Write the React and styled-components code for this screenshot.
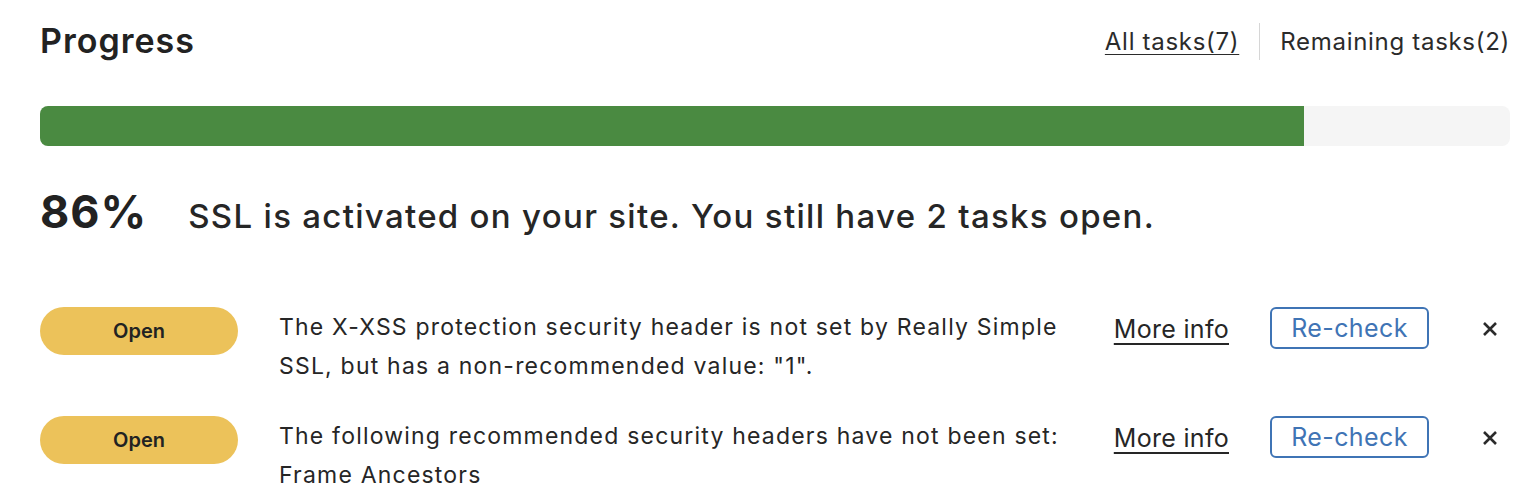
import React from "react";
import styled, { createGlobalStyle } from "styled-components";

const GlobalStyle = createGlobalStyle`
  body {
    margin: 0;
    background: #fff;
    font-family: Inter, "Noto Sans", sans-serif;
    color: #262626;
  }
`;

const tasks = [
  {
    id: 1,
    status: "Open",
    text: 'The X-XSS protection security header is not set by Really Simple SSL, but has a non-recommended value: "1".',
  },
  {
    id: 2,
    status: "Open",
    text: "The following recommended security headers have not been set: Frame Ancestors",
  },
];

const percent = 86;

const App = () => {
  return (
    <>
      <GlobalStyle />
      <Block>
        <Header>
          <Title>Progress</Title>
          <Filters>
            <FilterLink active>All tasks(7)</FilterLink>
            <Divider />
            <FilterLink>Remaining tasks(2)</FilterLink>
          </Filters>
        </Header>

        <Track>
          <Fill style={{ width: `${percent}%` }} />
        </Track>

        <Summary>
          <Percent>{percent}%</Percent>
          <SummaryText>SSL is activated on your site. You still have 2 tasks open.</SummaryText>
        </Summary>

        <TaskList>
          {tasks.map((task) => (
            <TaskRow key={task.id}>
              <Badge>{task.status}</Badge>
              <TaskText>{task.text}</TaskText>
              <MoreInfo href="#">More info</MoreInfo>
              <RecheckButton>Re-check</RecheckButton>
              <Dismiss aria-label="Dismiss">
                <svg width="16" height="16" viewBox="0 0 16 16">
                  <path d="M2 2 L14 14 M14 2 L2 14" stroke="#2b2b2b" strokeWidth="2.6" strokeLinecap="butt" />
                </svg>
              </Dismiss>
            </TaskRow>
          ))}
        </TaskList>
      </Block>
    </>
  );
};

const Block = styled.div`
  padding: 20px 26px 0 40px;
`;

const Header = styled.div`
  display: flex;
  justify-content: space-between;
  align-items: center;
`;

const Title = styled.h3`
  margin: 0;
  font-size: 34px;
  font-weight: 600;
  letter-spacing: 1px;
  line-height: 42px;
  color: #222;
`;

const Filters = styled.div`
  display: flex;
  align-items: center;
  gap: 20px;
  font-size: 24px;
  letter-spacing: 0.7px;
`;

const FilterLink = styled.span`
  color: #2b2b2b;
  text-decoration: ${(p) => (p.active ? "underline" : "none")};
  text-underline-offset: 4px;
  text-decoration-thickness: 1px;
  cursor: pointer;
`;

const Divider = styled.div`
  width: 1px;
  height: 37px;
  background: #d6d6d6;
`;

const Track = styled.div`
  margin-top: 44px;
  height: 40px;
  background: #f5f5f5;
  border-radius: 8px;
  overflow: hidden;
`;

const Fill = styled.div`
  height: 100%;
  background: #4a8a41;
`;

const Summary = styled.div`
  display: flex;
  align-items: baseline;
  gap: 41px;
  margin-top: 38px;
`;

const Percent = styled.span`
  font-size: 45px;
  font-weight: 700;
  letter-spacing: 1px;
  color: #222;
`;

const SummaryText = styled.span`
  font-size: 33px;
  font-weight: 500;
  letter-spacing: 1.3px;
  color: #262626;
`;

const TaskList = styled.div`
  margin-top: 68px;
  display: flex;
  flex-direction: column;
  gap: 30px;
`;

const TaskRow = styled.div`
  display: grid;
  grid-template-columns: 198px 1fr auto 159px 40px;
  column-gap: 41px;
  align-items: start;
`;

const Badge = styled.div`
  height: 48px;
  border-radius: 24px;
  background: #ecc25a;
  display: flex;
  align-items: center;
  justify-content: center;
  font-size: 20px;
  font-weight: 600;
  color: #222;
`;

const TaskText = styled.p`
  margin: 1px 0 0;
  font-size: 23px;
  letter-spacing: 1.2px;
  line-height: 39px;
  color: #262626;
`;

const MoreInfo = styled.a`
  font-size: 25px;
  letter-spacing: 0.3px;
  line-height: 44px;
  color: #262626;
  text-decoration: underline;
  text-underline-offset: 5px;
  text-decoration-thickness: 2px;
`;

const RecheckButton = styled.button`
  height: 42px;
  border: 2px solid #3f74b5;
  border-radius: 6px;
  background: #fff;
  color: #3f74b5;
  font-family: inherit;
  font-size: 25px;
  letter-spacing: 0.4px;
  padding: 0;
  cursor: pointer;
`;

const Dismiss = styled.button`
  height: 44px;
  border: none;
  background: none;
  padding: 0;
  display: flex;
  align-items: center;
  justify-content: center;
  cursor: pointer;
`;

export default App;
